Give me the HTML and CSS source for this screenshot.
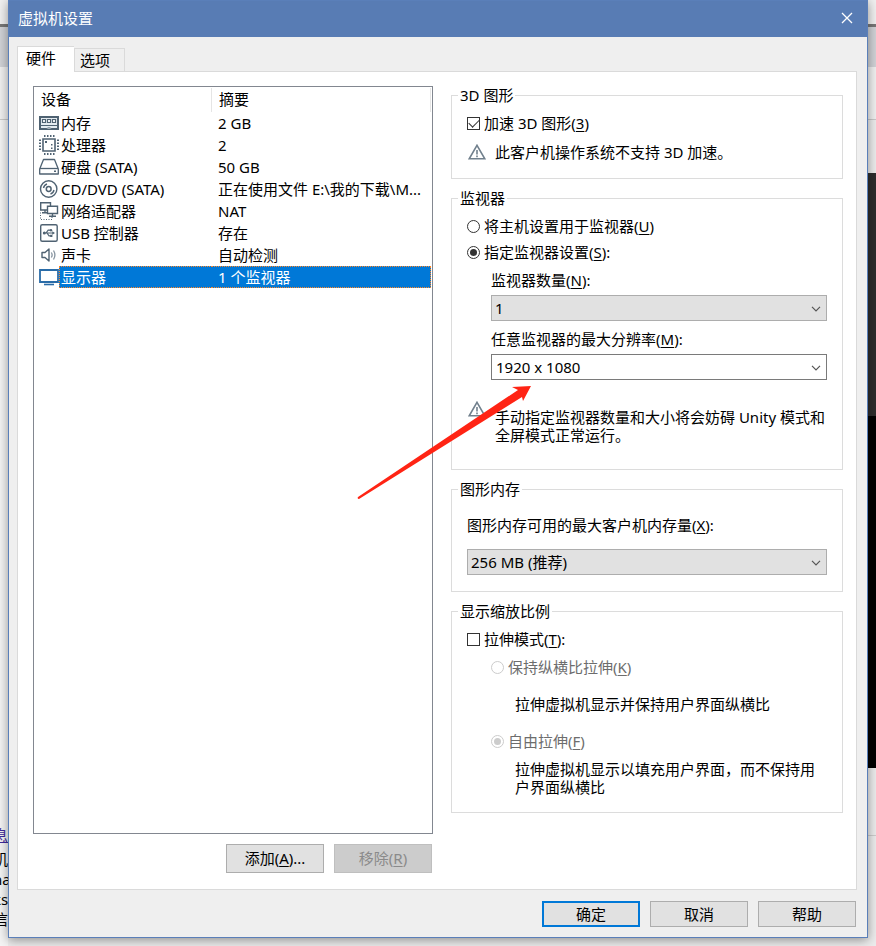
FILE: index.html
```
<!DOCTYPE html>
<html lang="zh-CN">
<head>
<meta charset="utf-8">
<title>虚拟机设置</title>
<link rel="stylesheet" href="styles.css">
</head>
<body>
<div class="desktop">
  <aside class="strip strip-left">
    <div class="band band-top"></div>
    <div class="band band-tool"></div>
    <div class="band band-space"></div>
    <div class="band band-page">
      <p><a href="#">息</a></p>
      <p>机</p>
      <p>na</p>
      <p>ks</p>
      <p>信</p>
    </div>
  </aside>

  <main class="dialog">
    <header class="titlebar">
      <h1>虚拟机设置</h1>
      <button class="close" type="button" aria-label="关闭">
        <svg width="12" height="12" viewBox="0 0 12 12"><path d="M1 1l10 10M11 1L1 11" stroke="#fff" stroke-width="1.3" fill="none"/></svg>
      </button>
    </header>

    <div class="content">
      <nav class="tabs">
        <button type="button" class="tab active">硬件</button>
        <button type="button" class="tab">选项</button>
      </nav>

      <section class="panel">
        <div class="devices">
          <div class="list">
            <table>
              <colgroup><col class="col-device"><col></colgroup>
              <thead>
                <tr><th>设备</th><th>摘要</th></tr>
              </thead>
              <tbody>
                <tr>
                  <td><div class="device"><svg class="icon" viewBox="0 0 20 20"><path d="M1 4h18v12H1z" fill="#e4ebf0" stroke="#4f6272" stroke-width="2"/><path d="M1 12.5h18" stroke="#4f6272"/><path d="M7 16.5l1.5-1.5h3l1.500 1.500z" fill="#fff" stroke="#4f6272"/><path d="M3.500 6.500h3v3h-3zM8.500 6.500h3v3h-3zM13.500 6.500h3v3h-3z" fill="#fff" stroke="#4f6272" stroke-width="1.200"/></svg><span>内存</span></div></td>
                  <td>2 GB</td>
                </tr>
                <tr>
                  <td><div class="device"><svg class="icon" viewBox="0 0 20 20"><path d="M4 4h12v12H4z" fill="#fff" stroke="#4f6272" stroke-width="1.6"/><path d="M5 1h11M5 19h11M1 4.500v11M19 4.500v11" stroke="#4f6272" stroke-width="2" stroke-dasharray="1.500 1.500" fill="none"/><path d="M6 6h2v2H6zM12 9h1.500v1.500H12zM12 12.500h1.500V14H12z" fill="#4f6272"/></svg><span>处理器</span></div></td>
                  <td>2</td>
                </tr>
                <tr>
                  <td><div class="device"><svg class="icon" viewBox="0 0 20 20"><path d="M4.500 2.500h11l3.800 9.500v5H.7v-5z" fill="#fff" stroke="#4f6272" stroke-width="1.300" stroke-linejoin="round"/><path d="M1 11.500h18" stroke="#4f6272" stroke-width="1.300"/><path d="M15 13.500h2v1.500h-2z" fill="#4f6272"/></svg><span>硬盘 (SATA)</span></div></td>
                  <td>50 GB</td>
                </tr>
                <tr>
                  <td><div class="device"><svg class="icon" viewBox="0 0 20 20"><circle cx="9.700" cy="10" r="8.200" fill="#fff" stroke="#4f6272" stroke-width="1.400"/><circle cx="9.700" cy="10" r="2.400" fill="#fff" stroke="#4f6272" stroke-width="1.500"/><path d="M4.500 9a5.300 5.300 0 0 1 3.500-4M15 11a5.300 5.300 0 0 1-3.500 4" fill="none" stroke="#4f6272" stroke-width="1.400"/></svg><span>CD/DVD (SATA)</span></div></td>
                  <td>正在使用文件 E:\我的下载\M...</td>
                </tr>
                <tr>
                  <td><div class="device"><svg class="icon" viewBox="0 0 20 20"><path d="M1.700 1.700h9.800v7.300H1.700z" fill="#fff" stroke="#4f6272" stroke-width="1.400"/><path d="M3 11.700h5.500M6 9v2.500" stroke="#4f6272" stroke-width="1.400"/><path d="M8.500 5.200h10v7.300h-10z" fill="#fff" stroke="#4f6272" stroke-width="1.400"/><path d="M10 15.200h7M13.500 12.500v2.500" stroke="#4f6272" stroke-width="1.400"/><path d="M1.500 11.500v7H13v-2.500" stroke="#4f6272" stroke-dasharray="1 1.500" fill="none"/></svg><span>网络适配器</span></div></td>
                  <td>NAT</td>
                </tr>
                <tr>
                  <td><div class="device"><svg class="icon" viewBox="0 0 20 20"><rect x="1.700" y="1.700" width="16.500" height="16.500" rx="1.500" fill="#fff" stroke="#4f6272" stroke-width="1.400"/><path d="M5 10h9M7 10l2.200-2.800h2.400M8 10l2 2.800h2" stroke="#4f6272" fill="none" stroke-width="1.200"/><circle cx="5.300" cy="10" r="1.500" fill="#4f6272"/><circle cx="12" cy="7.200" r="1.200" fill="#4f6272"/><path d="M11.200 11.700h2.200v2.200h-2.200zM13.300 8.200L16 10l-2.700 1.800z" fill="#4f6272"/></svg><span>USB 控制器</span></div></td>
                  <td>存在</td>
                </tr>
                <tr>
                  <td><div class="device"><svg class="icon" viewBox="0 0 20 20"><path d="M3 7.500h3l4-3.500v12l-4-3.500H3z" fill="#fff" stroke="#4f6272" stroke-width="1.400" stroke-linejoin="round"/><path d="M12.300 7.500q1.700 2.500 0 5M14.500 5.500q2.800 4.500 0 9" fill="none" stroke="#8794a0" stroke-width="1.300"/></svg><span>声卡</span></div></td>
                  <td>自动检测</td>
                </tr>
                <tr class="selected">
                  <td><div class="device"><svg class="icon" viewBox="0 0 20 20"><path d="M1 3h18v12H1z" fill="#fff" stroke="#2a6ca8" stroke-width="1.800"/><path d="M5 17.500h10" stroke="#2a6ca8" stroke-width="1.600"/></svg><span>显示器</span></div></td>
                  <td>1 个监视器</td>
                </tr>
              </tbody>
            </table>
          </div>
          <div class="list-actions">
            <button type="button" class="btn">添加(<u>A</u>)...</button>
            <button type="button" class="btn" disabled>移除(<u>R</u>)</button>
          </div>
        </div>

        <form class="settings">
          <fieldset class="group">
            <legend>3D 图形</legend>
            <label class="choice"><input type="checkbox" checked><span>加速 3D 图形(<u>3</u>)</span></label>
            <div class="notice">
              <svg class="warn" viewBox="0 0 18 16"><path d="M9 1.300L16.800 14.800H1.200z" fill="#fff" stroke="#71808d" stroke-width="1.600"/><path d="M9 6v4.500M9 11.600v1.600" stroke="#71808d" stroke-width="1.600"/></svg>
              <p>此客户机操作系统不支持 3D 加速。</p>
            </div>
          </fieldset>

          <fieldset class="group group-monitor">
            <legend>监视器</legend>
            <label class="choice"><input type="radio" name="monitor"><span>将主机设置用于监视器(<u>U</u>)</span></label>
            <label class="choice"><input type="radio" name="monitor" checked><span>指定监视器设置(<u>S</u>):</span></label>
            <div class="nested">
              <label class="caption" for="count">监视器数量(<u>N</u>):</label>
              <div class="combo">
                <select id="count"><option>1</option></select>
                <svg viewBox="0 0 10 6"><path d="M1 .8l4 4 4-4" fill="none" stroke="#555" stroke-width="1.200"/></svg>
              </div>
              <label class="caption" for="resolution">任意监视器的最大分辨率(<u>M</u>):</label>
              <div class="combo editable">
                <select id="resolution"><option>1920 x 1080</option></select>
                <svg viewBox="0 0 10 6"><path d="M1 .8l4 4 4-4" fill="none" stroke="#555" stroke-width="1.200"/></svg>
              </div>
            </div>
            <div class="notice">
              <svg class="warn" viewBox="0 0 18 16"><path d="M9 1.300L16.800 14.800H1.200z" fill="#fff" stroke="#71808d" stroke-width="1.600"/><path d="M9 6v4.500M9 11.600v1.600" stroke="#71808d" stroke-width="1.600"/></svg>
              <p>手动指定监视器数量和大小将会妨碍 Unity 模式和全屏模式正常运行。</p>
            </div>
          </fieldset>

          <fieldset class="group group-memory">
            <legend>图形内存</legend>
            <label class="caption" for="memory">图形内存可用的最大客户机内存量(<u>X</u>):</label>
            <div class="combo">
              <select id="memory"><option>256 MB (推荐)</option></select>
              <svg viewBox="0 0 10 6"><path d="M1 .8l4 4 4-4" fill="none" stroke="#555" stroke-width="1.200"/></svg>
            </div>
          </fieldset>

          <fieldset class="group">
            <legend>显示缩放比例</legend>
            <label class="choice"><input type="checkbox"><span>拉伸模式(<u>T</u>):</span></label>
            <div class="nested">
              <label class="choice off"><input type="radio" name="stretch" disabled><span>保持纵横比拉伸(<u>K</u>)</span></label>
              <p class="hint hint-apart">拉伸虚拟机显示并保持用户界面纵横比</p>
              <label class="choice off"><input type="radio" name="stretch" checked disabled><span>自由拉伸(<u>F</u>)</span></label>
              <p class="hint">拉伸虚拟机显示以填充用户界面，而不保持用户界面纵横比</p>
            </div>
          </fieldset>
        </form>
      </section>

      <footer class="actions">
        <button type="button" class="btn primary">确定</button>
        <button type="button" class="btn">取消</button>
        <button type="button" class="btn">帮助</button>
      </footer>
    </div>

    <svg class="arrow" viewBox="0 0 176 116" aria-hidden="true"><path d="M1 112L161 5L155 2L174 1L166 16L165 12L2 114Q0 114 1 112z" fill="#ff2414"/></svg>
  </main>

  <aside class="strip strip-right">
    <div class="band band-top"></div>
    <div class="band band-tool"></div>
    <div class="band band-space"></div>
    <div class="band band-gap"></div>
    <div class="band band-dark"></div>
    <div class="band band-black"></div>
    <div class="band band-light"></div>
    <div class="band band-page"></div>
  </aside>
</div>
</body>
</html>
```

FILE: styles.css
```
* {
  box-sizing: border-box;
}

body {
  margin: 0;
  background: #ececec;
  color: #000;
}

body,
button,
select {
  font-family: "Noto Sans", "Noto Sans CJK SC", sans-serif;
  font-size: 15px;
  line-height: 20px;
}

h1,
p {
  margin: 0;
}

u {
  text-underline-offset: 2px;
}

.desktop {
  display: grid;
  grid-template-columns: 8px minmax(0, 1fr) 8px;
  min-height: 100vh;
}

/* Windows behind the dialog */
.strip {
  display: flex;
  flex-direction: column;
  overflow: hidden;
  white-space: nowrap;
}

.band-top {
  height: 24px;
  background: #f0f0f0;
}

.band-tool {
  height: 43px;
  border-top: 3px solid #777;
  background: #d0d2d6;
}

.band-space {
  height: 53px;
  border-bottom: 1px solid #c8c8c8;
  background: #f0f0f0;
}

.band-gap {
  height: 53px;
}

.band-dark {
  height: 243px;
  background: #2d2d2d;
}

.band-black {
  height: 352px;
  background: #000;
}

.band-light {
  height: 68px;
  border-bottom: 1px solid #ccc;
}

.band-page {
  flex: 1;
}

.strip-left .band-page {
  padding-top: 705px;
  background: #f4f4f4;
}

.strip-left p {
  margin-left: -7px;
}

.strip-left p:first-child {
  margin-bottom: 4px;
}

.strip-left a {
  color: #3f2a9c;
}

/* Dialog */
.dialog {
  position: relative;
  display: flex;
  flex-direction: column;
  margin-bottom: 8px;
  border: 1px solid #5a7fb9;
  background: #efefef;
  box-shadow: 0 2px 10px rgba(0, 0, 0, 0.4);
}

.titlebar {
  display: flex;
  align-items: center;
  justify-content: space-between;
  height: 36px;
  padding: 0 14px 2px 9px;
  background: #587cb4;
  color: #fff;
}

.titlebar h1 {
  font-size: 15px;
  font-weight: 400;
}

.close {
  display: flex;
  padding: 0;
  border: 0;
  background: none;
}

.content {
  flex: 1;
  display: flex;
  flex-direction: column;
  padding: 9px 10px 10px 8px;
}

.tabs {
  display: flex;
  align-items: flex-end;
}

.tab {
  height: 23px;
  padding: 0 15px 1px 5px;
  border: 1px solid #dadada;
  border-width: 1px 1px 0 0;
  background: #efefef;
  color: #000;
}

.tab.active {
  z-index: 1;
  height: 26px;
  margin-bottom: -1px;
  padding: 0 18px 4px 8px;
  border-width: 1px 0 0 1px;
  background: #fff;
}

.tab.active + .tab {
  padding-right: 14px;
  border-left-width: 1px;
}

.panel {
  flex: 1;
  display: flex;
  gap: 18px;
  padding: 14px 13px 16px 15px;
  border: 1px solid #dadada;
  background: #fff;
}

.devices {
  flex: 1 1 400px;
  min-width: 0;
  display: flex;
  flex-direction: column;
  gap: 10px;
}

.list {
  flex: 1;
  padding-right: 1px;
  border: 1px solid #828790;
}

table {
  width: 100%;
  table-layout: fixed;
  border-collapse: separate;
  border-spacing: 0;
}

.col-device {
  width: 178px;
}

th {
  height: 25px;
  padding: 0 0 1px 7px;
  background: linear-gradient(#e5e5e5, #e5e5e5) right 0 top 1px / 1px 24px no-repeat;
  font-weight: 400;
  text-align: left;
}

td {
  height: 22px;
  padding: 0 0 0 6px;
  overflow: hidden;
  white-space: nowrap;
}

td:first-child {
  padding-left: 5px;
}

.device {
  display: flex;
  align-items: center;
  height: 22px;
}

.device span {
  flex: 1;
  padding-left: 2px;
}

.icon {
  flex: none;
  width: 20px;
  height: 20px;
}

.selected td:last-child,
.selected .device span {
  border: 1px dotted #ff8728;
  background: #0078d7;
  color: #fff;
}

.selected td:last-child {
  border-left: 0;
}

.selected .device span {
  border-right: 0;
  padding-left: 1px;
}

.list-actions,
.actions {
  display: flex;
  justify-content: flex-end;
  gap: 10px;
  padding-right: 1px;
}

.btn {
  width: 98px;
  height: 26px;
  padding: 0 0 1px;
  border: 1px solid #adadad;
  background: #e1e1e1;
  color: #000;
}

.list-actions .btn {
  height: 29px;
  padding-bottom: 2px;
}

.btn:disabled {
  border-color: #bfbfbf;
  background: #ccc;
  color: #8a8a8a;
}

.btn.primary {
  border: 2px solid #0078d7;
}

.actions {
  padding-top: 11px;
}

/* Settings */
.settings {
  flex: 1 1 392px;
  min-width: 0;
  display: flex;
  flex-direction: column;
  gap: 9px;
  margin-top: -1px;
}

.group {
  min-width: 0;
  margin: 0;
  padding: 0 15px 16px;
  border: 1px solid #dcdcdc;
}

legend {
  margin-left: -9px;
  padding: 0 2px;
}

.choice {
  display: flex;
  align-items: center;
  gap: 4px;
  margin-top: 8px;
}

.choice.off {
  color: #6d6d6d;
}

.group-monitor .choice + .choice {
  margin-top: 6px;
}

.choice input {
  appearance: none;
  flex: none;
  display: grid;
  place-items: center;
  width: 13px;
  height: 13px;
  margin: 0;
  border: 1px solid #333;
  background: #fff;
}

.choice input[type="radio"] {
  border-radius: 50%;
}

.choice input[type="radio"]:checked::before {
  content: "";
  width: 7px;
  height: 7px;
  border-radius: 50%;
  background: #333;
}

.choice input[type="checkbox"]:checked::before {
  content: "";
  width: 9px;
  height: 5px;
  border: solid #333;
  border-width: 0 0 1px 1px;
  transform: translateY(-1px) rotate(-45deg);
}

.choice input:disabled {
  border-color: #ccc;
}

.choice input[type="radio"]:disabled::before {
  background: #ccc;
}

.nested {
  padding-left: 24px;
}

.caption {
  display: block;
  margin-top: 8px;
}

.combo {
  position: relative;
  margin-top: 5px;
}

.combo select {
  appearance: none;
  display: block;
  width: 100%;
  height: 26px;
  padding: 0 24px 1px 3px;
  border: 1px solid #adadad;
  border-radius: 0;
  background: #e1e1e1;
  color: #000;
}

.combo.editable select {
  padding-left: 4px;
  border-color: #7a7a7a;
  background: #fff;
}

.combo svg {
  position: absolute;
  top: 11px;
  right: 6px;
  width: 10px;
  height: 6px;
  pointer-events: none;
}

.notice {
  display: flex;
  gap: 9px;
  margin-top: 9px;
  padding-left: 1px;
}

.notice p {
  flex: 1;
}

.warn {
  flex: none;
  width: 18px;
  height: 16px;
  margin-top: 2px;
}

.group-monitor {
  padding-bottom: 25px;
}

.group-monitor .notice {
  margin: 20px -3px 0 0;
}

.group-monitor .warn {
  margin-top: 1px;
}

.group-monitor .notice p {
  padding-top: 8px;
  line-height: 18px;
}

.group-memory .caption {
  margin-top: 16px;
}

.group-memory .combo {
  margin-top: 14px;
}

.hint {
  margin-top: 9px;
  padding-left: 24px;
  line-height: 18px;
}

.hint-apart {
  margin: 18px 0;
}

/* Annotation drawn over the dialog */
.arrow {
  position: absolute;
  top: 384px;
  left: 348px;
  width: 176px;
  height: 116px;
  pointer-events: none;
}
```
